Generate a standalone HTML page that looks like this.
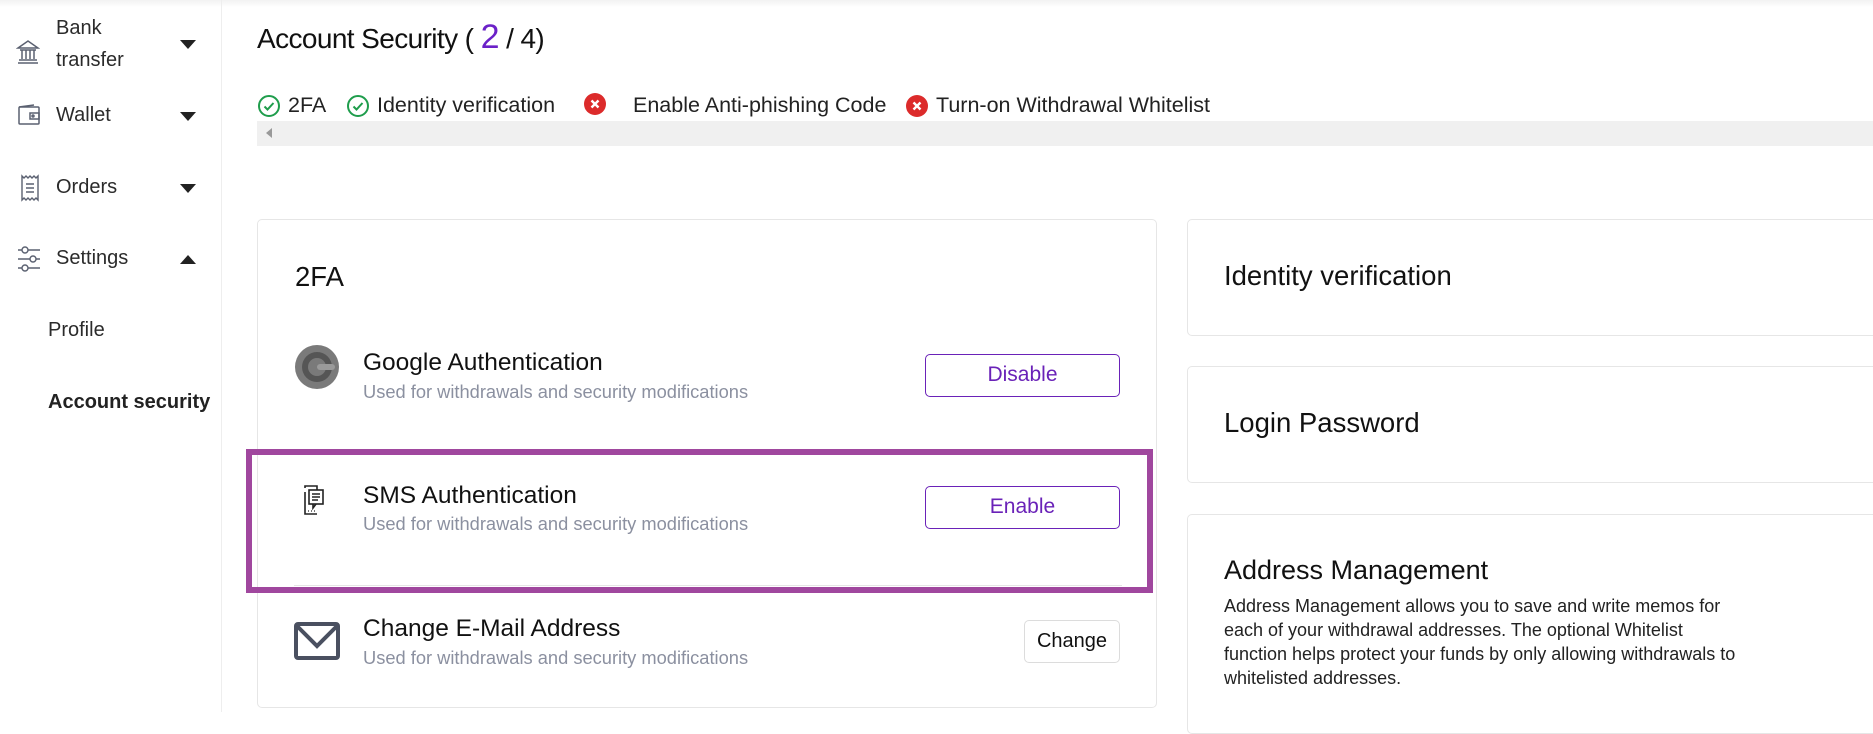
<!DOCTYPE html>
<html><head><meta charset="utf-8"><style>
*{margin:0;padding:0;box-sizing:border-box}
body{width:1873px;height:712px;overflow:hidden;background:#fff;font-family:"Liberation Sans",sans-serif;color:#1e1e1e;position:relative}
.a{position:absolute;white-space:nowrap}
.side{position:absolute;left:0;top:0;width:222px;height:712px;border-right:1px solid #eee}
.topb{position:absolute;left:0;top:0;width:1873px;height:7px;background:linear-gradient(#f2f2f2,#fff)}
.nav{font-size:20px;color:#2b2b2b}
.car{position:absolute;width:0;height:0;border-left:8px solid transparent;border-right:8px solid transparent}
.card{position:absolute;border:1px solid #e6e6e6;border-radius:5px;background:#fff}
.t{font-size:24.5px;color:#111}
.s{font-size:18.3px;color:#8b90a0}
.btn{position:absolute;border:1.5px solid #6a22b8;border-radius:5px;color:#6a22b8;font-size:21px;text-align:center}
.st{font-size:21.5px;color:#222}
.h{font-size:27.5px;color:#111}
</style></head><body>
<div class="topb"></div>
<div class="side">
  <svg class="a" style="left:16px;top:38px" width="24" height="28" viewBox="0 0 24 28" fill="none" stroke="#5a6070" stroke-width="1.5"><path d="M2 10 L12 3 L22 10 Z M4 12 H20 M6 12 V21 M10 12 V21 M14 12 V21 M18 12 V21 M3 22 H21 M2 25 H22"/></svg>
  <div class="a nav" style="left:56px;top:12px;line-height:32px">Bank<br>transfer</div>
  <div class="car" style="left:180px;top:40px;border-top:9px solid #222"></div>
  <svg class="a" style="left:18px;top:104px" width="22" height="22" viewBox="0 0 22 22" fill="none" stroke="#5a6070" stroke-width="1.5"><rect x="1" y="3" width="20" height="17" rx="1"/><path d="M1 3 L16 1 M12 9 H21 V15 H12 Z"/><circle cx="15" cy="12" r="1"/></svg>
  <div class="a nav" style="left:56px;top:104px">Wallet</div>
  <div class="car" style="left:180px;top:112px;border-top:9px solid #222"></div>
  <svg class="a" style="left:20px;top:174px" width="20" height="28" viewBox="0 0 20 28" fill="none" stroke="#5a6070" stroke-width="1.4"><path d="M2 2 L4 4 L6 2 L8 4 L10 2 L12 4 L14 2 L16 4 L18 2 V26 L16 24 L14 26 L12 24 L10 26 L8 24 L6 26 L4 24 L2 26 Z M6 10 H14 M6 14 H14 M6 18 H14"/></svg>
  <div class="a nav" style="left:56px;top:176px">Orders</div>
  <div class="car" style="left:180px;top:184px;border-top:9px solid #222"></div>
  <svg class="a" style="left:17px;top:246px" width="24" height="26" viewBox="0 0 24 26" fill="none" stroke="#5a6070" stroke-width="1.4"><path d="M1 4 H5 M11 4 H23 M1 13 H13 M19 13 H23 M1 22 H5 M11 22 H23"/><circle cx="8" cy="4" r="3"/><circle cx="16" cy="13" r="3"/><circle cx="8" cy="22" r="3"/></svg>
  <div class="a nav" style="left:56px;top:247px">Settings</div>
  <div class="car" style="left:180px;top:255px;border-bottom:9px solid #222"></div>
  <div class="a nav" style="left:48px;top:319px">Profile</div>
  <div class="a nav" style="left:48px;top:391px;font-weight:bold;color:#222">Account security</div>
</div>

<div class="a" style="left:257px;top:18px;font-size:28px;color:#111;letter-spacing:-0.6px">Account Security ( <span style="color:#6b21c8;font-size:34px">2</span> / 4)</div>

<svg class="a" style="left:257px;top:94px" width="24" height="24" viewBox="0 0 24 24"><circle cx="12" cy="12" r="10" fill="none" stroke="#1f9d4c" stroke-width="2"/><path d="M7.5 12.5 L10.5 15.5 L16.5 9" fill="none" stroke="#1f9d4c" stroke-width="2"/></svg>
<div class="a st" style="left:288px;top:93px">2FA</div>
<svg class="a" style="left:346px;top:94px" width="24" height="24" viewBox="0 0 24 24"><circle cx="12" cy="12" r="10" fill="none" stroke="#1f9d4c" stroke-width="2"/><path d="M7.5 12.5 L10.5 15.5 L16.5 9" fill="none" stroke="#1f9d4c" stroke-width="2"/></svg>
<div class="a st" style="left:377px;top:93px">Identity verification</div>
<svg class="a" style="left:583px;top:92px" width="24" height="24" viewBox="0 0 24 24"><circle cx="12" cy="12" r="11" fill="#dc2b2b"/><path d="M8.5 8.5 L15.5 15.5 M15.5 8.5 L8.5 15.5" stroke="#fff" stroke-width="2.4"/></svg>
<div class="a st" style="left:633px;top:93px">Enable Anti-phishing Code</div>
<svg class="a" style="left:905px;top:94px" width="24" height="24" viewBox="0 0 24 24"><circle cx="12" cy="12" r="11" fill="#dc2b2b"/><path d="M8.5 8.5 L15.5 15.5 M15.5 8.5 L8.5 15.5" stroke="#fff" stroke-width="2.4"/></svg>
<div class="a st" style="left:936px;top:93px">Turn-on Withdrawal Whitelist</div>
<div class="a" style="left:257px;top:121px;width:1616px;height:25px;background:#f0f0f0"></div>
<div class="a" style="left:266px;top:128px;width:0;height:0;border-top:5px solid transparent;border-bottom:5px solid transparent;border-right:6px solid #999"></div>

<div class="card" style="left:257px;top:219px;width:900px;height:489px"></div>
<div class="a h" style="left:295px;top:261px">2FA</div>

<svg class="a" style="left:294px;top:344px" width="46" height="46" viewBox="0 0 46 46"><circle cx="23" cy="23" r="22" fill="#7a7a7a"/><circle cx="23" cy="23" r="15" fill="#555"/><circle cx="23" cy="23" r="9" fill="#7a7a7a"/><rect x="23" y="20" width="18" height="6" rx="3" fill="#9a9a9a"/></svg>
<div class="a t" style="left:363px;top:349px">Google Authentication</div>
<div class="a s" style="left:363px;top:381px">Used for withdrawals and security modifications</div>
<div class="btn" style="left:925px;top:354px;width:195px;height:43px;line-height:40px">Disable</div>

<svg class="a" style="left:301px;top:484px" width="26" height="32" viewBox="0 0 26 32" fill="none" stroke="#222" stroke-width="1.6"><path d="M4 8 V30 H16 M4 4 V2 H16 V6"/><rect x="8" y="6" width="14" height="14"/><path d="M11 10 H19 M11 13 H19 M11 16 H17 M12 20 V24 L15 20"/><path d="M7 27 H8 M10 27 H11 M13 27 H14" stroke-width="1.2"/></svg>
<div class="a t" style="left:363px;top:482px">SMS Authentication</div>
<div class="a s" style="left:363px;top:513px">Used for withdrawals and security modifications</div>
<div class="btn" style="left:925px;top:486px;width:195px;height:43px;line-height:40px">Enable</div>
<div class="a" style="left:294px;top:585px;width:828px;height:1px;background:#e5e5e5"></div>
<div class="a" style="left:246px;top:449px;width:907px;height:144px;border:6px solid #a0479e"></div>

<svg class="a" style="left:294px;top:622px" width="46" height="38" viewBox="0 0 46 38" fill="none" stroke="#4a5060" stroke-width="4"><rect x="2" y="2" width="42" height="34" rx="2"/><path d="M3 4 L23 24 L43 4"/></svg>
<div class="a t" style="left:363px;top:615px">Change E-Mail Address</div>
<div class="a s" style="left:363px;top:647px">Used for withdrawals and security modifications</div>
<div class="a" style="left:1024px;top:620px;width:96px;height:43px;border:1px solid #dcdcdc;border-radius:5px;font-size:20px;text-align:center;line-height:41px;color:#111">Change</div>

<div class="card" style="left:1187px;top:219px;width:700px;height:117px"></div>
<div class="a h" style="left:1224px;top:260px">Identity verification</div>
<div class="card" style="left:1187px;top:366px;width:700px;height:117px"></div>
<div class="a h" style="left:1224px;top:407px">Login Password</div>
<div class="card" style="left:1187px;top:514px;width:700px;height:220px"></div>
<div class="a h" style="left:1224px;top:555px;font-size:27px">Address Management</div>
<div class="a" style="left:1224px;top:594px;font-size:18px;line-height:24px;color:#222">Address Management allows you to save and write memos for<br>each of your withdrawal addresses. The optional Whitelist<br>function helps protect your funds by only allowing withdrawals to<br>whitelisted addresses.</div>
</body></html>
